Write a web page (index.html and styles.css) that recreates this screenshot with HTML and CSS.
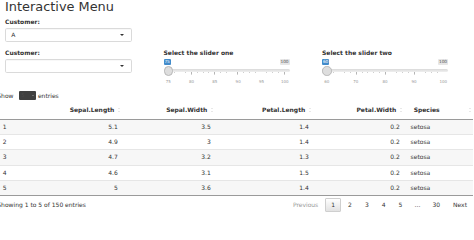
FILE: index.html
```html
<!DOCTYPE html>
<html lang="en">
<head>
<meta charset="utf-8">
<title>Interactive Menu</title>
<link rel="stylesheet" href="styles.css">
</head>
<body>
<div class="page">
  <h2 class="title">Interactive Menu</h2>
  <div class="form-group">
    <label class="lbl">Customer:</label>
    <div class="selectize"><span class="sel-text">A</span><span class="caret"></span></div>
  </div>
  <div class="row">
    <div class="col">
      <div class="form-group">
        <label class="lbl">Customer:</label>
        <div class="selectize"><span class="sel-text"></span><span class="caret"></span></div>
      </div>
    </div>
    <div class="col">
      <label class="lbl">Select the slider one</label>
      <div class="irs">
        <div class="irs-labels"><span class="irs-single">75</span><span class="irs-max">100</span></div>
        <div class="irs-line"><span class="irs-handle"></span></div>
        <div class="irs-grid ticks-five"></div>
        <div class="irs-grid-text"><span>75</span><span>80</span><span>85</span><span>90</span><span>95</span><span>100</span></div>
      </div>
    </div>
    <div class="col">
      <label class="lbl">Select the slider two</label>
      <div class="irs">
        <div class="irs-labels"><span class="irs-single">60</span><span class="irs-max">100</span></div>
        <div class="irs-line"><span class="irs-handle"></span></div>
        <div class="irs-grid ticks-four"></div>
        <div class="irs-grid-text"><span>60</span><span>70</span><span>80</span><span>90</span><span>100</span></div>
      </div>
    </div>
  </div>

  <div class="dt">
    <div class="dt-length">Show <span class="len-select"><span class="len-val">5</span><span class="len-caret"></span></span> entries</div>
    <table class="dt-table">
      <colgroup>
        <col class="w-idx"><col class="w-sl"><col class="w-sw"><col class="w-pl"><col class="w-pw"><col class="w-sp">
      </colgroup>
      <thead>
        <tr>
          <th></th>
          <th class="num sort">Sepal.Length</th>
          <th class="num sort">Sepal.Width</th>
          <th class="num sort">Petal.Length</th>
          <th class="num sort">Petal.Width</th>
          <th class="txt sort">Species</th>
        </tr>
      </thead>
      <tbody>
        <tr><td>1</td><td class="num">5.1</td><td class="num">3.5</td><td class="num">1.4</td><td class="num">0.2</td><td class="txt">setosa</td></tr>
        <tr><td>2</td><td class="num">4.9</td><td class="num">3</td><td class="num">1.4</td><td class="num">0.2</td><td class="txt">setosa</td></tr>
        <tr><td>3</td><td class="num">4.7</td><td class="num">3.2</td><td class="num">1.3</td><td class="num">0.2</td><td class="txt">setosa</td></tr>
        <tr><td>4</td><td class="num">4.6</td><td class="num">3.1</td><td class="num">1.5</td><td class="num">0.2</td><td class="txt">setosa</td></tr>
        <tr><td>5</td><td class="num">5</td><td class="num">3.6</td><td class="num">1.4</td><td class="num">0.2</td><td class="txt">setosa</td></tr>
      </tbody>
    </table>
    <div class="dt-footer">
      <div class="dt-info">Showing 1 to 5 of 150 entries</div>
      <div class="dt-paginate">
        <span class="pbtn disabled">Previous</span>
        <span class="pbtn current">1</span>
        <span class="pbtn">2</span>
        <span class="pbtn">3</span>
        <span class="pbtn">4</span>
        <span class="pbtn">5</span>
        <span class="ellipsis">…</span>
        <span class="pbtn">30</span>
        <span class="pbtn">Next</span>
      </div>
    </div>
  </div>
</div>
</body>
</html>
```
FILE: styles.css
```css
* { box-sizing: border-box; }

html, body {
  margin: 0;
  padding: 0;
  background: #fff;
}

body {
  width: 474px;
  height: 218px;
  overflow: hidden;
  font-family: "DejaVu Sans", sans-serif;
  font-size: 6px;
  line-height: 8.6px;
  color: #333;
}

.page {
  padding-left: 5px;
}

.title {
  font-size: 12.9px;
  font-weight: normal;
  line-height: 13.3px;
  margin: 0 0 4.3px;
  color: #333;
}

.lbl {
  display: block;
  font-weight: bold;
  margin-bottom: 2.15px;
}

.form-group {
  margin-bottom: 6.3px;
}

.selectize {
  width: 127px;
  height: 14px;
  display: flex;
  align-items: center;
  justify-content: space-between;
  padding: 0 7px 0 5.2px;
  border: 1px solid #dadada;
  border-radius: 1.7px;
  background: #fff;
  box-shadow: inset 0 0.5px 0.5px rgba(0, 0, 0, 0.06);
}

.caret {
  width: 0;
  height: 0;
  border-left: 2px solid transparent;
  border-right: 2px solid transparent;
  border-top: 2px solid #333;
}

.row {
  display: grid;
  grid-template-columns: 158.5px 158.5px 1fr;
}

/* slider */
.irs {
  width: 126px;
}

.irs-labels {
  display: flex;
  justify-content: space-between;
  height: 5.4px;
}

.irs-single,
.irs-max {
  font-size: 4.3px;
  line-height: 5.4px;
  padding: 0 0.9px;
  border-radius: 1px;
}

.irs-single {
  background: #428bca;
  color: #fff;
}

.irs-max {
  background: #e6e6e6;
  color: #555;
}

.irs-line {
  position: relative;
  margin-top: 4.6px;
  height: 3px;
  border-radius: 2px;
  background: linear-gradient(#d9d9d9, #f0f0f0);
}

.irs-handle {
  position: absolute;
  left: 0;
  top: -3.25px;
  width: 9.5px;
  height: 9.5px;
  border-radius: 50%;
  border: 0.7px solid #b8b8b8;
  background: #dedede;
}

.irs-grid {
  margin: 0 4.75px;
  height: 2.6px;
}

.ticks-five {
  background:
    repeating-linear-gradient(90deg, #b5b5b5 0 0.8px, transparent 0.8px 23.14px) 0 0 / 100% 2.6px no-repeat,
    repeating-linear-gradient(90deg, #cfcfcf 0 0.8px, transparent 0.8px 5.785px) 0 0 / 100% 1.4px no-repeat;
}

.ticks-four {
  background:
    repeating-linear-gradient(90deg, #b5b5b5 0 0.8px, transparent 0.8px 28.925px) 0 0 / 100% 2.6px no-repeat,
    repeating-linear-gradient(90deg, #cfcfcf 0 0.8px, transparent 0.8px 5.785px) 0 0 / 100% 1.4px no-repeat;
}

.irs-grid-text {
  display: flex;
  justify-content: space-between;
  margin: 4.7px 4.75px 0;
  font-size: 4px;
  line-height: 4px;
  color: #999;
}

.irs-grid-text span {
  width: 0;
  display: flex;
  justify-content: center;
  white-space: nowrap;
}

/* datatable */
.dt {
  margin: 8px 0 0 -6.5px;
  width: 474.5px;
}

.dt-length {
  height: 8.6px;
  margin-left: -1.2px;
  white-space: nowrap;
}

.len-select {
  display: inline-flex;
  align-items: center;
  justify-content: space-between;
  vertical-align: middle;
  width: 16.7px;
  height: 8.7px;
  margin: -1px 0 0 3.9px;
  padding: 0 2.5px 0 2px;
  background: #404040;
  border-radius: 1px;
}

.len-val {
  color: #4c4c4c;
  font-size: 5px;
}

.len-caret {
  width: 0;
  height: 0;
  border-left: 1.4px solid transparent;
  border-right: 1.4px solid transparent;
  border-top: 1.5px solid #9a9a9a;
}

.dt-table {
  width: 100%;
  margin-top: 2px;
  border-collapse: collapse;
  table-layout: fixed;
}

.w-idx { width: 29.5px; }
.w-sl { width: 94px; }
.w-sw { width: 93px; }
.w-pl { width: 98px; }
.w-pw { width: 91px; }
.w-sp { width: 69px; }

.dt-table th {
  position: relative;
  padding: 4px 7.7px;
  line-height: 8.6px;
  font-weight: bold;
  text-align: left;
  border-bottom: 1px solid #9a9a9a;
  white-space: nowrap;
}

.dt-table td {
  padding: 2.85px 4.3px;
  line-height: 8.6px;
  border-bottom: 1px solid #e6e6e6;
}

.dt-table .num { text-align: right; }

.dt-table th.txt { padding-left: 9.7px; }
.dt-table td.txt { padding-left: 6.6px; }

.dt-table tbody tr:nth-child(odd) { background: #f7f7f7; }
.dt-table tbody tr:last-child td { border-bottom-color: #9a9a9a; }

.sort::before,
.sort::after {
  content: "";
  position: absolute;
  right: 1.8px;
  width: 0;
  height: 0;
  border-left: 1.2px solid transparent;
  border-right: 1.2px solid transparent;
}

.sort::before {
  top: calc(50% - 2.4px);
  border-bottom: 1.8px solid #d2d2d2;
}

.sort::after {
  top: calc(50% + 0.6px);
  border-top: 1.8px solid #d2d2d2;
}

.dt-footer {
  display: flex;
  justify-content: space-between;
  align-items: flex-start;
}

.dt-info {
  padding-top: 5px;
  margin-left: -1.2px;
}

.dt-paginate {
  display: flex;
  padding-top: 1.5px;
}

.pbtn,
.ellipsis {
  margin-left: 1px;
  border: 1px solid transparent;
  line-height: 12px;
  color: #333;
}

.pbtn {
  padding: 0 5px;
  border-radius: 1px;
}

.ellipsis {
  padding: 0 4px;
}

.pbtn.disabled { color: #999; }

.pbtn.current {
  border-color: #cfcfcf;
  background: linear-gradient(#ffffff, #e2e2e2);
}
```
